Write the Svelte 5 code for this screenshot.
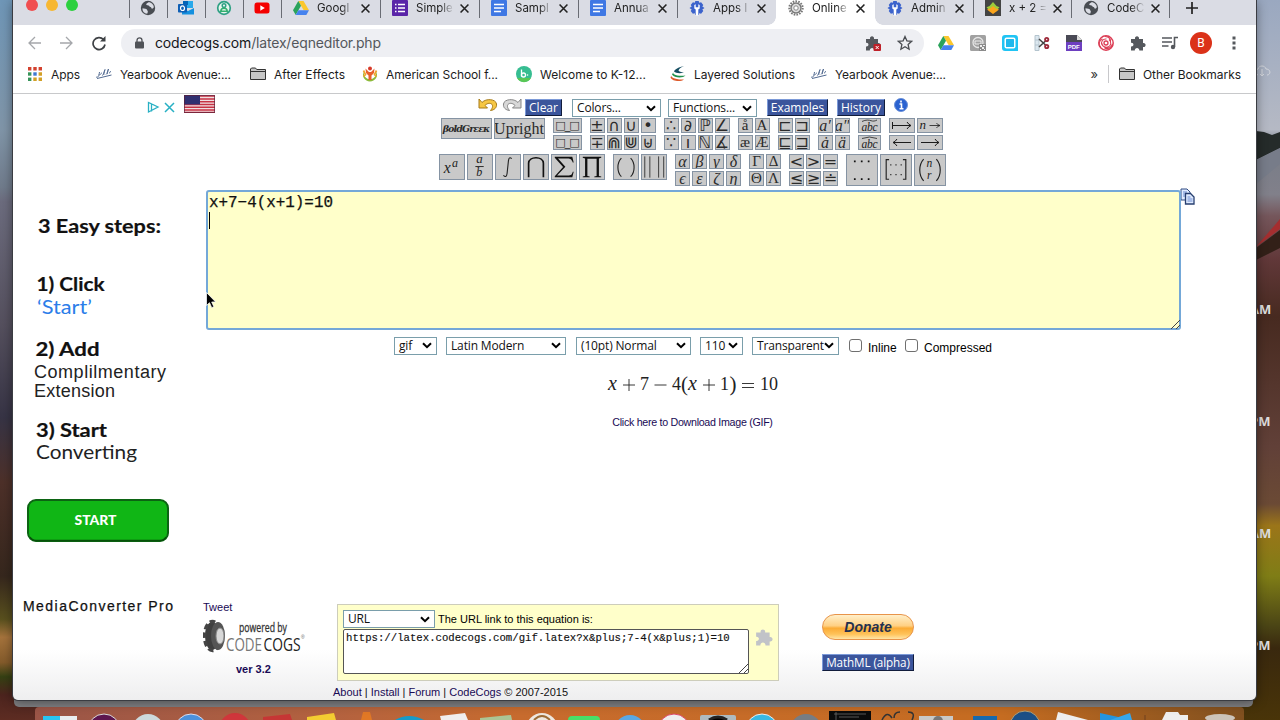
<script lang="ts">
    const pinned: string[] = ['globe', 'outlook', 'person', 'youtube'];

    const tabs = [
        { icon: 'drive', title: 'Googl', width: 99 },
        { icon: 'forms', title: 'Simple', width: 99 },
        { icon: 'docs', title: 'Sampl', width: 99 },
        { icon: 'docs', title: 'Annua', width: 99 },
        { icon: 'admin', title: 'Apps I', width: 99 },
        { icon: 'cog', title: 'Online', width: 99, active: true },
        { icon: 'admin', title: 'Admin', width: 98 },
        { icon: 'leaf', title: 'x + 2 =', width: 98 },
        { icon: 'globe', title: 'CodeC', width: 98 }
    ];

    const bookmarks = [
        { icon: 'apps', title: 'Apps', width: 68, text: 29 },
        { icon: 'jostens', title: 'Yearbook Avenue:...', width: 154, text: 111 },
        { icon: 'folder', title: 'After Effects', width: 112, text: 71 },
        { icon: 'people', title: 'American School f...', width: 154, text: 112 },
        { icon: 'brain', title: 'Welcome to K-12...', width: 154, text: 106 },
        { icon: 'layers', title: 'Layered Solutions', width: 141, text: 101 },
        { icon: 'jostens', title: 'Yearbook Avenue:...', width: 150, text: 111 }
    ];

    const extensions: string[] = ['drive', 'qr', 'square', 'snip', 'pdf', 'swirl', 'puzzle', 'queue'];

    // every group is a grid of equation buttons: columns, cell size, labels
    const panelTop = [
        { cols: 2, w: 51, h: 21, cells: ['βoldGrεεκ', 'Upright'], kind: 'word' },
        { cols: 1, w: 29, h: 15, cells: ['□_□', '□_□'], kind: 'box' },
        { cols: 4, w: 15, h: 15, cells: ['±', '∩', '∪', '•', '∓', '⋒', '⋓', '⊎'], kind: 'sym' },
        { cols: 4, w: 15, h: 15, cells: ['∴', '∂', 'ℙ', '∠', '∵', 'ı', 'ℕ', '∡'], kind: 'sym' },
        { cols: 2, w: 15, h: 15, cells: ['å', 'À', 'æ', 'Æ'], kind: 'serif' },
        { cols: 2, w: 15, h: 15, cells: ['⊏', '⊐', '⊑', '⊒'], kind: 'sym' },
        { cols: 2, w: 15, h: 15, cells: ['a′', 'a″', 'ȧ', 'ä'], kind: 'ital' },
        { cols: 1, w: 23, h: 15, cells: ['tilde', 'hat'], kind: 'accent' },
        { cols: 2, w: 26, h: 15, cells: ['mapsto', 'nto', 'from', 'to'], kind: 'arrow' }
    ];

    const panelBottom = [
        { cols: 6, w: 26, h: 26, cells: ['power', 'frac', 'int', 'cap', 'sum', 'prod'], kind: 'draw' },
        { cols: 2, w: 26, h: 26, cells: ['paren', 'norm'], kind: 'draw' },
        { cols: 4, w: 15, h: 15, cells: ['α', 'β', 'γ', 'δ', 'ϵ', 'ε', 'ζ', 'η'], kind: 'ital' },
        { cols: 2, w: 15, h: 15, cells: ['Γ', 'Δ', 'Θ', 'Λ'], kind: 'serif' },
        { cols: 3, w: 15, h: 15, cells: ['<', '>', '=', '≤', '≥', '≐'], kind: 'sym' },
        { cols: 3, w: 32, h: 32, cells: ['dots', 'matrix', 'binom'], kind: 'draw' }
    ];

    const options = [
        { value: 'gif', width: 43, gap: 9 },
        { value: 'Latin Modern', width: 120, gap: 10 },
        { value: '(10pt) Normal', width: 115, gap: 9 },
        { value: '110', width: 43, gap: 9 },
        { value: 'Transparent', width: 87, gap: 10 }
    ];
</script>

{#snippet icon(name: string)}
    <svg class="icon" viewBox="0 0 16 16">
        {#if name === 'globe'}
            <circle cx="8" cy="8" r="7.2" fill="#484c52" />
            <path d="M2.5 8.2c2 .3 4 .2 4.500 1.500s1 1 .8 2.300l-.6 1.800C4 13.300 2.200 11 2.500 8.200zM8.500 2.300c-.8 1-2.300 1-2.300 2.200s2.500.4 3 1.600 2 .8 2.200 2 2 .4 2.400-.8C14 5 11.500 2.300 8.500 2.300z" fill="#dadce4" />
        {:else if name === 'outlook'}
            <path d="M5 1h10v7H5z" fill="#28a8ea" />
            <path d="M5 1h5v4H5z" fill="#0364b8" />
            <path d="M4 8l6 3 6-3v6.500H4z" fill="#1490df" />
            <rect x="0" y="4" width="9" height="8.500" rx=".8" fill="#0f5fb5" />
            <ellipse cx="4.500" cy="8.200" rx="2" ry="2.300" fill="none" stroke="#fff" stroke-width="1.200" />
        {:else if name === 'person'}
            <circle cx="8" cy="8" r="6.300" fill="#e8f4ee" stroke="#2fa084" stroke-width="1.700" />
            <circle cx="8" cy="5.600" r="1.800" fill="none" stroke="#2fa084" stroke-width="1.500" />
            <path d="M4.800 11.300c0-4 6.400-4 6.400 0z" fill="none" stroke="#35b070" stroke-width="1.600" />
        {:else if name === 'youtube'}
            <rect x=".5" y="2.500" width="15" height="11" rx="2.500" fill="#f40000" />
            <path d="M6.300 5.300l4.500 2.700-4.500 2.700z" fill="#fff" />
        {:else if name === 'drive'}
            <path d="M5.300 1h5.200L16 10.300h-5.300z" fill="#fbc72d" />
            <path d="M5.300 1L0 10.300 2.700 15 8 5.700z" fill="#2aa35b" />
            <path d="M5.400 10.300H16L13.300 15H2.700z" fill="#4582ee" />
        {:else if name === 'forms' || name === 'docs'}
            <rect width="16" height="16" rx="1" fill={name === 'forms' ? '#5a25a8' : '#3f78e4'} />
            {#if name === 'forms'}
                <path d="M3 4.500h1.500M3 8h1.500M3 11.500h1.500M6 4.500h7M6 8h7M6 11.500h7" stroke="#fff" stroke-width="1.500" />
            {:else}
                <path d="M3 4.500h10M3 8h10M3 11.500h7" stroke="#fff" stroke-width="1.600" />
            {/if}
        {:else if name === 'admin'}
            <path d="M6.300 1h3.400l.5 1.800 1.900-.6L14.300 5l-1 1.600L15.500 8l-2.200 1.400 1 1.600-2.200 2.800-1.900-.6-.5 1.800H6.300l-.5-1.800-1.900.6L1.700 11l1-1.600L.5 8l2.200-1.400-1-1.600 2.200-2.800 1.900.6z" fill="#3c63cc" />
            <path d="M5.300 5v3.400l1.400 1.200V15.500h2.600V9.600l1.400-1.200V5L9.300 4.200v3H6.700v-3z" fill="#fff" />
        {:else if name === 'cog'}
            <circle cx="8" cy="8" r="6.700" fill="none" stroke="#777" stroke-width="2" stroke-dasharray="1.600 1.200" />
            <circle cx="8" cy="8" r="5" fill="#ddd" stroke="#777" stroke-width="1.400" />
            <circle cx="8" cy="8" r="2.200" fill="#fff" stroke="#888" />
        {:else if name === 'leaf'}
            <rect width="16" height="16" fill="#444444" />
            <path d="M8 2l3.500 4 3 1.300L12 10H4L1.500 7.300l3-1.300z" fill="#9ccb3b" />
            <path d="M2 9.500l3-1 3-2.500 3 2.500 3 1-2.500 2L8 14l-3.500-2.500z" fill="#fba51c" />
        {:else if name === 'apps'}
            <path d="M1 1h3.400v3.400H1zM6.300 1h3.400v3.400H6.300zM11.600 1H15v3.400h-3.400z" fill="#d3422f" />
            <path d="M1 6.300h3.400v3.400H1z" fill="#38945a" /><path d="M6.300 6.300h3.400v3.400H6.300z" fill="#3d77d1" />
            <path d="M11.600 6.300H15v3.400h-3.400zM6.300 11.600h3.400V15H6.300zM11.600 11.600H15V15h-3.400z" fill="#d2a027" /><path d="M1 11.600h3.400V15H1z" fill="#38945a" />
        {:else if name === 'jostens'}
            <path d="M0 11c2 1 3-1 3.500-5M3 8.500c1 2 2-2 3-1.500M6 9.500c1.500 0 2.500-5 3-6 -1 3-1.500 5-1 5.500M10 8.500c1 0 2-5 2.500-5.500-.8 2.500-1.500 5-.7 5M13 7.500c1-.5.8-2 2-2.300M1 12.500L15.500 9" fill="none" stroke="#526a91" />
        {:else if name === 'folder'}
            <path d="M.5 13.500V3l1-1h4l1.200 1.500h8.800v10z" fill="#c7c7c7" stroke="#333" />
            <path d="M1 5.500h14" stroke="#333" />
        {:else if name === 'people'}
            <path d="M2 5c-3 6 1 10 6 10.500C13 15 17 11 14 5c1 5-2 7-4 8H6C4 12 1 10 2 5z" fill="#8dba3a" />
            <path d="M3.500 2.500L7 6h2l3.500-3.500L12 7l-2.500 2.500V14h-3V9.500L4 7z" fill="#e8602c" />
            <circle cx="8" cy="2.500" r="2" fill="#d73a2a" />
            <path d="M1.500 4.500l2 4-2 2M14.500 4.500l-2 4 2 2" fill="none" stroke="#efa42d" stroke-width="1.700" />
        {:else if name === 'brain'}
            <circle cx="8" cy="8" r="8" fill="#36bd91" />
            <path d="M1 12a8 8 0 0 0 14 0z" fill="#59c755" />
            <path d="M5.500 3.500v7" stroke="#fff" stroke-width="1.300" />
            <circle cx="7.500" cy="9" r="2" fill="none" stroke="#fff" stroke-width="1.300" />
            <circle cx="11.500" cy="9" r=".8" fill="#fff" />
        {:else if name === 'layers'}
            <path d="M14 0C9 1 5 3 4 5.500c2 2 6 2 10 1.200-3-.5-5-1-5.500-2.200C9 3 11 1 14 0z" fill="#174f63" />
            <path d="M3.500 6C2 8 6 10.500 15.500 9.500 13 12.500 4 12 2 8.500z" fill="#20924c" />
            <path d="M1.500 9C0 11 5 14 14 13.500 10 16.500 2 15 .5 11.500z" fill="#dd5a2b" />
        {:else if name === 'qr'}
            <rect width="16" height="16" rx="1.500" fill="#a1a1a1" />
            <circle cx="8" cy="7.500" r="5" fill="none" stroke="#e6e6e6" stroke-width="1.300" />
            <path d="M5 6h6v3H5z" fill="none" stroke="#eee" />
            <path d="M9 9h7v7H9z" fill="#8b8b8b" />
            <path d="M10 10h2v2h-2zM13 10h2v1h-2zM12 12h2v2h-2zM10 14h1v1h-1zM14 14h1v1h-1z" fill="#eee" />
        {:else if name === 'square'}
            <path d="M3 0h10a3 3 0 0 1 3 3v13H3a3 3 0 0 1-3-3V3a3 3 0 0 1 3-3z" fill="#20c4f4" />
            <rect x="2.500" y="2.500" width="11" height="11" rx="2" fill="#fff" />
            <rect x="4" y="4" width="8" height="8" rx=".5" fill="#20b8ec" />
        {:else if name === 'snip'}
            <path d="M1 .5h4v15H1zM1 5h4M1 10h4" fill="#dce7ef" stroke="#b4c4ce" />
            <path d="M5 4l6.500 6M5 12l6.500-6" stroke="#444" stroke-width="1.600" />
            <circle cx="12.700" cy="4.500" r="1.600" fill="none" stroke="#9e2b3b" stroke-width="1.900" />
            <circle cx="12.700" cy="11.500" r="1.600" fill="none" stroke="#9e2b3b" stroke-width="1.900" />
        {:else if name === 'pdf'}
            <path d="M0 0h11l5 5v3H0z" fill="#4a4a55" /><path d="M11 0v5h5z" fill="#ddd" />
            <rect y="7" width="16" height="9" fill="#6d3fc0" />
            <text x="1.700" y="14" class="pdf">PDF</text>
        {:else if name === 'swirl'}
            <circle cx="8" cy="8" r="7.200" fill="none" stroke="#dc3e55" stroke-width="1.500" />
            <path d="M7 1.500c4 0 6.500 3 5.500 6.500M14.500 9c-1 4-5 5.500-8 4M2.500 12.500c-2.500-3-1.500-7 2-8.500M4 10C2.500 6.500 5 3.500 8.500 4M11 4.500c3 2.500 2 6.500-1 7.500M11 11.500c-3 2-7 0-7-3" fill="none" stroke="#dc3e55" stroke-width="1.100" />
            <circle cx="8" cy="8" r="2" fill="none" stroke="#dc3e55" stroke-width="1.300" />
        {:else if name === 'puzzle' || name === 'blocked' || name === 'plugin'}
            <path d="M1 4h4C4.300.3 9.700.3 9 4h4v4c3.500-.5 3.500 4.500 0 4v3.500H9.300c.3-3.500-4.800-3.500-4.500 0H1v-4c3.300.3 3.300-4 0-3.700z" fill={name === 'plugin' ? '#c1c3c8' : '#55585d'} />
            {#if name === 'blocked'}
                <rect x="8.500" y="9" width="7.500" height="7" rx="1" fill="#bf2028" />
                <path d="M10.700 11l3 3M13.700 11l-3 3" stroke="#fff" />
            {/if}
        {:else if name === 'queue'}
            <path d="M0 3h10M0 7h10M0 11h6.500" stroke="#55585d" stroke-width="1.500" />
            <path d="M12.500 12V2.500H16" fill="none" stroke="#55585d" stroke-width="1.600" />
            <circle cx="11" cy="12" r="2.200" fill="#55585d" />
        {/if}
    </svg>
{/snippet}

{#snippet drawing(name: string)}
    <svg viewBox="0 0 26 26" class="drawing">
        {#if name === 'power'}
            <text x="4" y="19" class="it" font-size="17">x</text>
            <text x="13" y="13" class="it" font-size="13">a</text>
        {:else if name === 'frac'}
            <text x="9" y="9" class="it" font-size="14">a</text>
            <path d="M8 12.500h9" stroke="#222" />
            <text x="9" y="23" class="it" font-size="13">b</text>
        {:else if name === 'int'}
            <path d="M17 4c-2-2-3-1-3.500 2L12 20c-.5 4-2 4-4 2" fill="none" stroke="#222" stroke-width="1.200" />
        {:else if name === 'cap'}
            <path d="M5 24V9c0-8 16-8 16 0v15" fill="none" stroke="#111" stroke-width="1.800" />
        {:else if name === 'sum'}
            <path d="M3 2h19l1.500 6h-1C21 4.500 20 3.700 17 3.700H6.500l8 9-9 9.500H17c4 0 4.500-1 5.500-4h1L22 24H3v-1l9-10-9-10z" fill="#111" />
        {:else if name === 'prod'}
            <path d="M3 2h20v1l-2.500.7v19l2.500.6v.9h-7.500v-.9l2.500-.6V4H8v18.700l2.500.6v.9H3v-.9l2.500-.6v-19L3 3z" fill="#111" />
        {:else if name === 'paren'}
            <path d="M8 3.500c-5 5-5 15 0 20M18 3.500c5 5 5 15 0 20" fill="none" stroke="#222" stroke-width="1.200" />
        {:else if name === 'norm'}
            <path d="M3 1.500v23M8.500 1.500v23M18 1.500v23M23.500 1.500v23" stroke="#333" />
        {:else if name === 'dots'}
            <path d="M6 5.500h1.500M12 5.500h1.500M18 5.500h1.500M6 21h1.500M12 21h1.500M18 21h1.500" stroke="#111" stroke-width="1.500" />
        {:else if name === 'matrix'}
            <path d="M7 4H4.500v17H7M19 4h2.500v17H19" fill="none" stroke="#222" />
            <path d="M8 8.500h1M12.500 8.500h1M17 8.500h1M8 17h1M12.500 17h1M17 17h1" stroke="#222" />
        {:else}
            <path d="M7.500 3.500c-4.500 5-4.500 14 0 19M18.500 3.500c4.500 5 4.500 14 0 19" fill="none" stroke="#222" />
            <text x="10" y="10.500" class="it" font-size="10">n</text>
            <text x="10.500" y="21" class="it" font-size="10">r</text>
        {/if}
    </svg>
{/snippet}

{#snippet accent(name: string)}
    <svg viewBox="0 0 21 13" class="drawing">
        <text x="2.500" y="11.500" class="it" font-size="11.500" textLength="16">abc</text>
        {#if name === 'tilde'}
            <path d="M3 2.500c4-2 7-1.500 9-.8s4 .5 6-.7" fill="none" stroke="#222" stroke-width=".8" />
        {:else}
            <path d="M3 2.500q7.500-3 15 0" fill="none" stroke="#222" stroke-width=".8" />
        {/if}
    </svg>
{/snippet}

{#snippet arrow(name: string)}
    <svg viewBox="0 0 24 13" class="drawing">
        {#if name === 'mapsto'}
            <path d="M2.500 3v7M2.500 6.500h18M17 3q1.500 2.500 4 3.500-2.500 1-4 3.500" fill="none" stroke="#1c1c1c" />
        {:else if name === 'nto'}
            <text x="1.500" y="9.500" class="it" font-size="13">n</text>
            <path d="M11.500 6.500h10M18.500 4q1 2 3.500 2.500-2.500.5-3.500 2.500" fill="none" stroke="#1c1c1c" stroke-width=".8" />
        {:else if name === 'from'}
            <path d="M3 6.500h18M7 3q-1.500 2.500-4 3.500 2.500 1 4 3.500" fill="none" stroke="#1c1c1c" />
        {:else}
            <path d="M3 6.500h18M17 3q1.500 2.500 4 3.500-2.500 1-4 3.500" fill="none" stroke="#1c1c1c" />
        {/if}
    </svg>
{/snippet}

{#snippet panel(groups: typeof panelTop)}
    <div class="panel">
        {#each groups as group}
            <div class="group" style="grid-template-columns: repeat({group.cols}, {group.w}px); grid-auto-rows: {group.h}px;">
                {#each group.cells as cell}
                    <span class="cell {group.kind}" class:greek={cell.startsWith('βold')}>
                        {#if group.kind === 'draw'}
                            {@render drawing(cell)}
                        {:else if group.kind === 'accent'}
                            {@render accent(cell)}
                        {:else if group.kind === 'arrow'}
                            {@render arrow(cell)}
                        {:else}
                            {cell}
                        {/if}
                    </span>
                {/each}
            </div>
        {/each}
    </div>
{/snippet}

{#snippet select(value: string, width: number)}
    <span class="select" style="width: {width}px">
        <span>{value}</span>
        <svg viewBox="0 0 10 7"><path d="M1 1.200l4 4 4-4" fill="none" stroke="#000" stroke-width="2" /></svg>
    </span>
{/snippet}

<div class="desktop">
    <svg class="wallpaper" viewBox="0 0 1280 720">
        <defs>
            <linearGradient id="left" x1="0" y1="0" x2="0" y2="1">
                <stop offset="0" stop-color="#6f96b7" />
                <stop offset=".18" stop-color="#8095a8" />
                <stop offset=".26" stop-color="#707b8b" />
                <stop offset=".28" stop-color="#6c6c7e" />
                <stop offset=".45" stop-color="#55505e" />
                <stop offset=".58" stop-color="#373445" />
                <stop offset=".67" stop-color="#4d3029" />
                <stop offset=".8" stop-color="#36271d" />
                <stop offset=".86" stop-color="#59501e" />
                <stop offset=".885" stop-color="#a5733c" />
                <stop offset=".92" stop-color="#845b2b" />
                <stop offset=".94" stop-color="#354013" />
                <stop offset=".965" stop-color="#4c241e" />
                <stop offset="1" stop-color="#5d2c22" />
            </linearGradient>
            <linearGradient id="right" x1="0" y1="0" x2="0" y2="1">
                <stop offset="0" stop-color="#9aa8c0" />
                <stop offset=".18" stop-color="#b5b9c4" />
                <stop offset=".2" stop-color="#777d88" />
                <stop offset=".27" stop-color="#81808a" />
                <stop offset=".3" stop-color="#75565b" />
                <stop offset=".36" stop-color="#613839" />
                <stop offset=".44" stop-color="#472a20" />
                <stop offset=".62" stop-color="#614038" />
                <stop offset=".7" stop-color="#6b4a35" />
                <stop offset=".73" stop-color="#9b7519" />
                <stop offset=".8" stop-color="#7f7d16" />
                <stop offset=".87" stop-color="#4a4415" />
                <stop offset=".9" stop-color="#39280e" />
                <stop offset="1" stop-color="#493408" />
            </linearGradient>
        </defs>
        <rect width="640" height="720" fill="url(#left)" />
        <rect x="640" width="640" height="720" fill="url(#right)" />
        <path d="M1256 131l8 1 8 3 8-3v16l-24 12z" fill="#252b2a" />
        <path d="M1256 160l24-12v16l-24 20z" fill="#777c89" />
        <path d="M1256 247l24-28v10l-24 18z" fill="#a52e2f" />
        <path d="M1256 248l24-18v18l-24 12z" fill="#322018" />
        <path d="M1258 75c-3-1-3-5 0-6 1-4 7-4 8 0 5 0 5 6 1 6M1262 69v7l-2-2m2 2l2-2" fill="none" stroke="#d5d8de" />
        <text x="1250" y="314" class="clock">AM</text>
        <text x="1250" y="426" class="clock">PM</text>
        <text x="1250" y="538" class="clock">AM</text>
        <text x="1250" y="650" class="clock">PM</text>
    </svg>

    <div class="window-behind"></div>

    <svg class="dock" viewBox="35 707 1209 13">
        <defs>
            <linearGradient id="shelf">
                <stop offset="0" stop-color="#9a5547" />
                <stop offset=".25" stop-color="#b4623f" />
                <stop offset=".4" stop-color="#c76b2e" />
                <stop offset=".8" stop-color="#c56c21" />
                <stop offset="1" stop-color="#80501f" />
            </linearGradient>
        </defs>
        <path d="M35 720v-9q0-4 4-4h1201q4 0 4 4v9z" fill="url(#shelf)" />
        <path d="M43 716h17v4H43z" fill="#28c5f2" /><path d="M60 716h17v4H60z" fill="#e9edf0" />
        <circle cx="104" cy="730" r="16" fill="#5c164f" stroke="#ddd" />
        <circle cx="148" cy="730" r="16" fill="#ccd9dc" />
        <circle cx="191" cy="730" r="16" fill="#4b91dc" stroke="#dde" />
        <circle cx="235" cy="729" r="16" fill="#d0363b" />
        <path d="M263 717l27-3 2 6h-29z" fill="#c63635" /><path d="M307 717l27-4 2 7h-29z" fill="#f4cc31" />
        <path d="M363 712h7l2 8h-11z" fill="#e17825" />
        <path d="M395 720q14-8 29 0z" fill="#169ac9" />
        <path d="M440 716l25-3 3 7h-27z" fill="#f0eeee" /><path d="M480 718l31-3 1 5h-32z" fill="#abc595" />
        <circle cx="542" cy="729" r="16" fill="#eee8df" /><path d="M534 720q8-8 16 0" fill="none" stroke="#9c6c35" stroke-width="2" />
        <rect x="568" y="716" width="32" height="12" rx="4" fill="#48df68" />
        <circle cx="630" cy="731" r="16" fill="#5aa8e4" />
        <circle cx="674" cy="730" r="16" fill="#eee" stroke="#de4667" />
        <rect x="700" y="715" width="36" height="8" rx="2" fill="#aebbc0" /><path d="M709 720q9-6 18 0" stroke="#222" stroke-width="3" />
        <circle cx="762" cy="730" r="16" fill="#38b8e3" stroke="#eee" />
        <circle cx="806" cy="730" r="16" fill="#777d84" />
        <path d="M829 711h42v9h-42z" fill="#0b0b0b" />
        <path d="M834 714h32M836 712v8M839 717h20" stroke="#777" stroke-width=".7" />
        <path d="M882 720q5-10 10-2M894 718q0-6 6-6M908 712q8 0 4 8" fill="none" stroke="#333" stroke-width="1.500" />
        <rect x="919" y="716" width="34" height="5" fill="#c9c9c7" /><circle cx="938" cy="721" r="5" fill="#777" />
        <path d="M973 716h24v4h-24z" fill="#1769ad" />
        <circle cx="1025" cy="726" r="15" fill="#1b4f86" stroke="#b1a078" />
        <path d="M1058 712l30 8h-32z" fill="#eee" /><path d="M1100 713l32 7h-32z" fill="#2595df" /><path d="M1130 713l-20 7h22z" fill="#36a7ec" />
        <path d="M1145 715v5" stroke="#70411e" />
        <path d="M1166 712h12l2 3h8v5h-26z" fill="#eee" />
        <ellipse cx="1220" cy="718" rx="15" ry="4" fill="#ccc4ba" />
    </svg>

    <div class="browser">
        <header class="tabstrip">
            <div class="lights"><i class="red"></i><i class="yellow"></i><i class="green"></i></div>
            {#each pinned as name}
                <div class="pin">{@render icon(name)}</div>
            {/each}
            {#each tabs as tab}
                <div class="tab" class:active={tab.active} style="width: {tab.width}px">
                    {@render icon(tab.icon)}
                    <span class="title">{tab.title}</span>
                    <svg class="close" viewBox="0 0 8 8"><path d="M.5.5l7 7M7.500.5l-7 7" stroke="#222" stroke-width="1.400" /></svg>
                </div>
            {/each}
            <div class="plus"><svg viewBox="0 0 12 12"><path d="M6 0v12M0 6h12" stroke="#222" stroke-width="1.700" /></svg></div>
        </header>

        <nav class="toolbar">
            <svg class="arrows" viewBox="0 0 78 16">
                <path d="M13 8H1M7 2L1 8l6 6M32 8h12M38 2l6 6-6 6" fill="none" stroke="#a5a7ab" stroke-width="1.300" />
                <path d="M75.500 4.500A6 6 0 1 0 77 9.500" fill="none" stroke="#3e4145" stroke-width="1.700" />
                <path d="M77.500 1v5.500H72z" fill="#3e4145" />
            </svg>
            <div class="url">
                <svg class="lock" viewBox="0 0 9 12"><path d="M2 5V3.500c0-3.500 5-3.500 5 0V5" fill="none" stroke="#505358" stroke-width="1.300" /><rect y="4.500" width="9" height="7" rx="1" fill="#505358" /></svg>
                <span class="address"><b>codecogs.com</b>/latex/eqneditor.php</span>
                {@render icon('blocked')}
                <svg class="star" viewBox="0 0 16 16"><path d="M8 1.500l1.900 4.300 4.700.5-3.500 3.200 1 4.700L8 11.800l-4.100 2.400 1-4.700L1.400 6.300l4.700-.5z" fill="none" stroke="#4a4d52" stroke-width="1.300" /></svg>
            </div>
            <div class="extensions">
                {#each extensions as name}
                    {@render icon(name)}
                {/each}
            </div>
            <span class="avatar">B</span>
            <svg class="menu" viewBox="0 0 4 14"><path d="M.5.500h3v3h-3zM.5 5.500h3v3h-3zM.5 10.500h3v3h-3z" fill="#55585d" /></svg>
        </nav>

        <nav class="bookmarks">
            {#each bookmarks as mark}
                <div class="bookmark" style="width: {mark.width}px">
                    {@render icon(mark.icon)}
                    <svg class="label" width={mark.text} height="18"><text y="13.500" textLength={mark.text}>{mark.title}</text></svg>
                </div>
            {/each}
            <div class="more">»</div>
            <div class="other">
                {@render icon('folder')}
                <svg class="label" width="98" height="18"><text y="13.500" textLength="98">Other Bookmarks</text></svg>
            </div>
        </nav>

        <div class="page">
            <aside>
                <svg viewBox="13 94 171 606" width="171" height="606">
                    <path d="M148.500 102.500v9.500l9.500-5zM151.500 103.500v8" fill="none" stroke="#28b0c4" stroke-width="1.300" />
                    <path d="M165 103l9 9M174 103l-9 9" stroke="#28b0c4" stroke-width="1.500" />
                    <g class="ad-bold">
                        <text x="38" y="233" textLength="123" lengthAdjust="spacingAndGlyphs">3 Easy steps:</text>
                        <text x="36.500" y="291" textLength="68" lengthAdjust="spacingAndGlyphs">1) Click</text>
                        <text x="35.500" y="356" textLength="64" lengthAdjust="spacingAndGlyphs">2) Add</text>
                        <text x="36" y="437" textLength="71" lengthAdjust="spacingAndGlyphs">3) Start</text>
                    </g>
                    <text class="ad-soft blue" x="37" y="314" textLength="55" lengthAdjust="spacingAndGlyphs">‘Start’</text>
                    <text class="ad-plain" x="34" y="378" textLength="132">Complilmentary</text>
                    <text class="ad-plain" x="34" y="397" textLength="81">Extension</text>
                    <text class="ad-soft" x="36" y="459" textLength="101" lengthAdjust="spacingAndGlyphs">Converting</text>
                    <rect x="28" y="500" width="140" height="41" rx="8" fill="#10b615" stroke="#0c6413" stroke-width="2" />
                    <path d="M30 537q2 3.500 6 3.500h124q4 0 6-3.500" fill="none" stroke="#07500a" stroke-width="1.500" />
                    <text class="ad-start" x="74.500" y="525" textLength="42" lengthAdjust="spacingAndGlyphs">START</text>
                    <text class="ad-name" x="23" y="611" textLength="150">MediaConverter Pro</text>
                </svg>
            </aside>

            <main>
                <div class="actions">
                    <svg class="flag" viewBox="0 0 31 18">
                        <rect width="31" height="18" fill="#f0dfe2" />
                        <path d="M0 1h31M0 4h31M0 6.800h31M0 9.500h31M0 12.200h31M0 15h31M0 17.500h31" stroke="#c73344" stroke-width="1.400" />
                        <rect width="16" height="9.500" fill="#302f70" />
                        <rect x=".5" y=".5" width="30" height="17" fill="none" stroke="#5b2037" opacity=".7" />
                    </svg>
                    <svg class="undo" viewBox="0 0 20 14"><path d="M1 1v9h8.500L7 7.500C10 4 15 5 14.500 8.500c0 1.500-1 2.500-2 4 4-.5 6.500-3 6-6.500C18 1 8 0 4 4.500z" fill="#f6c744" stroke="#a77b18" /></svg>
                    <svg class="redo" viewBox="0 0 20 14"><path d="M19 1v9h-8.500L13 7.500C10 4 5 5 5.500 8.500c0 1.500 1 2.500 2 4-4-.5-6.500-3-6-6.500C2 1 12 0 16 4.500z" fill="#d8d8d8" stroke="#858585" /></svg>
                    <span class="button clear">Clear</span>
                    {@render select('Colors...', 89)}
                    {@render select('Functions...', 89)}
                    <span class="button examples">Examples</span>
                    <span class="button history">History</span>
                    <svg class="info" viewBox="0 0 14 14"><circle cx="7" cy="7" r="6.500" fill="#2a62d0" stroke="#6c91d8" /><path d="M7 2.500v2M5.500 6H7.500v4.500M5.500 10.800h4" fill="none" stroke="#fff" stroke-width="1.600" /></svg>
                </div>

                <div class="upper">{@render panel(panelTop)}</div>
                {@render panel(panelBottom)}

                <div class="editor">
                    <div class="code">x+7−4(x+1)=10<br /><span class="caret"></span>
                        <svg class="grip" viewBox="0 0 9 9"><path d="M0 9l9-9M5 9l4-4" stroke="#444" /></svg>
                        <svg class="pointer" viewBox="0 0 10 17"><path d="M.5.5v13l3-2.800 2.200 5 2.200-1-2.200-4.700h4z" fill="#000" stroke="#fff" stroke-width=".8" /></svg>
                    </div>
                    <svg class="copy" viewBox="0 0 15 17">
                        <path d="M1 1h6l3 3v8H1z" fill="#dfeafe" stroke="#314c84" /><path d="M3 4h4M3 6h4M3 8h4" stroke="#6d8cd0" />
                        <path d="M5.500 5.500h5l3.500 3.500v7H5.500z" fill="#dfeafe" stroke="#273f70" stroke-width="1.300" /><path d="M7.500 9h3M7.500 11h5M7.500 13h5" stroke="#6d8cd0" />
                    </svg>
                </div>

                <div class="options">
                    {#each options as option}
                        <div style="margin-right: {option.gap}px">{@render select(option.value, option.width)}</div>
                    {/each}
                    <i class="check"></i><span class="inline">Inline</span>
                    <i class="check"></i><span class="compressed">Compressed</span>
                </div>

                <div class="preview">
                    <svg class="equation" viewBox="0 0 172 26" width="172" height="26">
                        <g class="math">
                            <text class="var" x="1" y="18">x</text>
                            <text x="33" y="18">7</text>
                            <text x="65" y="18">4</text>
                            <text class="bracket" x="74" y="18.500">(</text>
                            <text class="var" x="81" y="18">x</text>
                            <text x="113" y="18">1</text>
                            <text class="bracket" x="122.500" y="18.500">)</text>
                            <text x="153" y="18">10</text>
                        </g>
                        <path d="M16 13h12M22 7v12M47.500 13h12M96 13h12M102 7v12M135 11.500h12M135 15.500h12" stroke="#222" stroke-width=".9" />
                    </svg>
                    <a class="download" href="#download">Click here to Download Image (GIF)</a>
                </div>

                <footer>
                    <div class="brand">
                        <a href="#tweet">Tweet</a>
                        <svg viewBox="203 615 104 42" width="104" height="42">
                            <ellipse cx="212" cy="636" rx="7" ry="14" fill="#3f3f3f" />
                            <ellipse cx="212.500" cy="636" rx="8" ry="14.500" fill="none" stroke="#454545" stroke-width="3.500" stroke-dasharray="5.500 3" />
                            <ellipse cx="218" cy="636" rx="7" ry="14" fill="#555" />
                            <ellipse cx="220" cy="636" rx="4" ry="8" fill="#d8d8d8" stroke="#888" />
                            <text x="239" y="632" class="powered" textLength="48" lengthAdjust="spacingAndGlyphs">powered by</text>
                            <text x="226" y="651" class="code-word" textLength="36" lengthAdjust="spacingAndGlyphs">CODE</text>
                            <text x="263.500" y="651" class="code-word dark" textLength="37" lengthAdjust="spacingAndGlyphs">COGS</text>
                            <text x="301" y="639" font-size="5" fill="#666">®</text>
                        </svg>
                        <b>ver 3.2</b>
                    </div>

                    <div class="embed">
                        <div class="link-box">
                            <div class="link-main">
                                <div class="link-head">{@render select('URL', 92)}<span class="hint">The URL link to this equation is:</span></div>
                                <div class="link">https://latex.codecogs.com/gif.latex?x&amp;plus;7-4(x&amp;plus;1)=10
                                    <svg class="grip" viewBox="0 0 9 9"><path d="M0 9l9-9M5 9l4-4" stroke="#444" /></svg>
                                </div>
                            </div>
                            {@render icon('plugin')}
                        </div>
                        <p class="copyright"><a href="#about">About</a> | <a href="#install">Install</a> | <a href="#forum">Forum</a> | <a href="#codecogs">CodeCogs</a> © 2007-2015</p>
                    </div>

                    <div class="support">
                        <span class="donate">Donate</span>
                        <span class="button mathml">MathML (alpha)</span>
                    </div>
                </footer>
            </main>
        </div>
    </div>
</div>

<style>
    :global(body) {
        overflow: hidden;
    }

    .desktop {
        width: 1280px;
        height: 720px;
        position: relative;
        overflow: hidden;
        font-family: "Liberation Sans", Arial, sans-serif;
    }

    .desktop, .desktop * {
        box-sizing: border-box;
    }

    svg {
        display: block;
        flex: none;
    }

    a {
        color: #190a55;
        text-decoration: none;
    }

    .wallpaper {
        position: absolute;
        inset: 0;
        width: 1280px;
        height: 720px;
    }

    .clock {
        font: bold 13px "Open Sans", sans-serif;
        fill: #dedede;
    }

    .window-behind {
        position: absolute;
        left: 14px;
        top: 20px;
        width: 1239px;
        height: 687px;
        border-radius: 5px;
        background: #808184;
    }

    .dock {
        position: absolute;
        left: 35px;
        top: 707px;
        width: 1209px;
        height: 13px;
    }

    .browser {
        position: absolute;
        left: 13px;
        top: 0;
        width: 1243px;
        height: 700px;
        overflow: hidden;
        background: linear-gradient(#fff 650px, #eeeeef 700px);
        border-radius: 0 0 5px 5px;
        box-shadow: 0 0 0 1px #3a3c42, 0 2px 12px rgba(0, 0, 0, .45);
    }

    .icon {
        width: 16px;
        height: 16px;
        overflow: visible;
    }

    .pdf {
        font: bold 6px "Liberation Sans", sans-serif;
        fill: #fff;
    }

    .tabstrip {
        display: flex;
        height: 25px;
        background: #dadce4;
    }

    .lights {
        display: flex;
        gap: 8px;
        width: 116px;
        padding-left: 13px;
    }

    .lights i {
        width: 12px;
        height: 12px;
        margin-top: -1px;
        border-radius: 50%;
    }

    .red { background: #f04e50; }
    .yellow { background: #f7b731; }
    .green { background: #2cd03e; }

    .pin {
        width: 38px;
        padding-left: 11px;
    }

    .pin,
    .tab {
        background-image: linear-gradient(#696c74, #696c74);
        background-size: 1px 18px;
        background-repeat: no-repeat;
    }

    .tab {
        display: flex;
        padding-left: 12px;
    }

    .tab.active {
        height: 26px;
        background: #fff;
        position: relative;
    }

    .tab.active::before,
    .tab.active::after {
        content: '';
        position: absolute;
        bottom: 1px;
        width: 8px;
        height: 8px;
    }

    .tab.active::before {
        left: -8px;
        background: radial-gradient(circle at 0 0, #dadce4 7.500px, #fff 8px);
    }

    .tab.active::after {
        right: -8px;
        background: radial-gradient(circle at 100% 0, #dadce4 7.500px, #fff 8px);
    }

    .tab.active + .tab {
        background-image: none;
    }

    .title {
        width: 40px;
        height: 18px;
        margin-left: 8px;
        white-space: nowrap;
        font: 11.500px/16px Inter, sans-serif;
        color: #222;
        -webkit-mask-image: linear-gradient(90deg, #000 60%, transparent 95%);
        mask-image: linear-gradient(90deg, #000 60%, transparent 95%);
    }

    .close {
        width: 9px;
        height: 9px;
        margin: 4px 0 0 4px;
    }

    .plus {
        width: 44px;
        padding: 2px 0 0 17px;
        background: linear-gradient(#696c74, #696c74) 0 0 / 1px 18px no-repeat;
    }

    .plus svg {
        width: 12px;
        height: 12px;
    }

    .toolbar {
        display: flex;
        align-items: center;
        height: 36px;
        padding-left: 15px;
    }

    .arrows {
        width: 78px;
        height: 16px;
        margin-right: 15px;
    }

    .url {
        display: flex;
        align-items: center;
        width: 803px;
        height: 28px;
        padding: 0 11px 0 14px;
        border-radius: 14px;
        background: #eeeff3;
    }

    .lock {
        width: 9px;
        height: 12px;
        margin-right: 11px;
    }

    .address {
        flex: 1;
        margin-top: -1px;
        font: 14px Inter, sans-serif;
        letter-spacing: -.17px;
        color: #54575c;
    }

    .address b {
        font-weight: 400;
        color: #15171a;
    }

    .star {
        width: 16px;
        height: 16px;
        margin-left: 16px;
    }

    .extensions {
        display: flex;
        gap: 16px;
        margin-left: 14px;
    }

    .avatar {
        width: 22px;
        height: 22px;
        margin: 0 20px 0 12px;
        border-radius: 50%;
        background: #db3219;
        color: #fff;
        font: 12px/22px Roboto, sans-serif;
        text-align: center;
    }

    .menu {
        width: 4px;
        height: 14px;
    }

    .bookmarks {
        display: flex;
        align-items: center;
        height: 33px;
        padding: 0 15px 6px 14px;
        border-bottom: 1px solid #c8c9cb;
    }

    .bookmark,
    .other {
        display: flex;
        align-items: center;
        gap: 8px;
    }

    .bookmark:first-child {
        margin-right: 1px;
    }

    .label {
        overflow: visible;
        font: 12px Inter, sans-serif;
        fill: #1c1c1c;
    }

    .more {
        flex: 1;
        padding-right: 10px;
        text-align: right;
        font: 13px Inter, sans-serif;
        color: #333;
    }

    .other {
        padding-left: 10px;
        border-left: 1px solid #c8c8cb;
    }

    .page {
        display: flex;
        height: 606px;
    }

    aside {
        width: 171px;
    }

    .ad-bold { font: bold 18.500px Lato, sans-serif; fill: #111; stroke: #111; stroke-width: .2; }
    .ad-soft { font: 18.500px Lato, sans-serif; fill: #222; }
    .ad-soft.blue { fill: #2b7de9; }
    .ad-plain { font: 18px "Liberation Sans", sans-serif; fill: #222; }
    .ad-start { font: 900 13px Lato, sans-serif; fill: #fff; }
    .ad-name { font: 14px "Liberation Sans", sans-serif; fill: #111; stroke: #111; stroke-width: .25; }

    main {
        flex: 1;
        padding-right: 55px;
    }

    .actions {
        display: flex;
        height: 24px;
        padding-top: 4px;
    }

    .flag {
        width: 31px;
        height: 18px;
        margin: -3px 263px 0 0;
    }

    .undo, .redo {
        width: 20px;
        height: 14px;
        margin-right: 4px;
    }

    .redo {
        margin-right: 3px;
    }

    .button {
        height: 17px;
        border: 1px solid;
        border-color: #7c9ad8 #111c3b #111c3b #7c9ad8;
        background: #3b559c;
        color: #fff;
        font: 12px/15px "Open Sans", sans-serif;
        text-align: center;
        white-space: nowrap;
    }

    .clear { width: 37px; margin-right: 10px; }
    .examples { width: 61px; margin: 0 9px 0 3px; }
    .history { width: 48px; margin-right: 9px; }
    .clear, .examples, .history { margin-top: .5px; }
    .mathml { font-size: 11.700px; letter-spacing: -.1px; }

    .info {
        width: 14px;
        height: 14px;
    }

    .select {
        display: flex;
        align-items: center;
        justify-content: space-between;
        height: 18px;
        padding: 0 4px 0 4px;
        border: 1px solid #7a9eab;
        background: #fff;
        color: #111;
        font: 12px/16px "Open Sans", sans-serif;
        letter-spacing: -.15px;
        white-space: nowrap;
    }

    .actions .select {
        margin: 1px 7px 0 0;
    }

    .select svg {
        width: 10px;
        height: 7px;
    }

    .upper {
        margin-left: -1px;
        padding-right: 1px;
    }

    .panel {
        display: flex;
        justify-content: center;
        align-items: flex-start;
        gap: 8px;
        height: 36px;
    }

    .group {
        display: grid;
        gap: 2px;
    }

    .cell {
        display: flex;
        align-items: center;
        justify-content: center;
        overflow: hidden;
        border: 1px solid #8593a3;
        background: #c9c9c9;
        color: #2b2b2b;
        font-family: "Liberation Serif", "DejaVu Serif", serif;
        line-height: 13px;
    }

    .word { font-size: 16px; }
    .greek { font: italic bold 9.500px "DejaVu Serif", serif; letter-spacing: -.9px; }
    .box { font: 11px/13px "DejaVu Sans", sans-serif; letter-spacing: -1px; }
    .sym { font: 16px/13px "DejaVu Sans", sans-serif; }
    .serif { font-size: 15px; }
    .ital { font-size: 16px; font-style: italic; }

    .drawing {
        width: 100%;
        height: 100%;
    }

    .it {
        font-family: "Liberation Serif", serif;
        font-style: italic;
        fill: #222;
    }

    .editor {
        display: flex;
        height: 146px;
        padding-left: 22px;
    }

    .code {
        position: relative;
        width: 975px;
        height: 140px;
        flex: none;
        padding: 2px 1px;
        border: 2px solid #74a8d8;
        border-radius: 3px;
        background: #ffffca;
        color: #111;
        font: 15.900px/18px "Liberation Mono", monospace;
        -webkit-text-stroke: .25px #111;
    }

    .caret {
        display: block;
        width: 1px;
        height: 17px;
        background: #000;
    }

    .grip {
        position: absolute;
        right: 0;
        bottom: 0;
        width: 9px;
        height: 9px;
    }

    .code .grip {
        right: -1px;
        bottom: -1px;
    }

    .pointer {
        position: absolute;
        left: -2px;
        top: 100px;
        width: 10px;
        height: 17px;
    }

    .copy {
        width: 15px;
        height: 17px;
        margin: -2px 0 0 -1px;
    }

    .options {
        display: flex;
        height: 20px;
        padding-left: 210px;
        font-size: 12px;
    }

    .options .select {
        margin-top: .5px;
    }

    .check {
        width: 13px;
        height: 13px;
        margin: 3px 6px 0 0;
        border: 1px solid #6f6f6f;
        border-radius: 3px;
    }

    .inline,
    .compressed {
        margin-top: 5px;
    }

    .inline {
        width: 37px;
    }

    .preview {
        display: flex;
        flex-direction: column;
        align-items: center;
        height: 248px;
        padding-top: 15px;
    }

    .equation {
        margin-top: 1px;
    }

    .math {
        font-family: "Liberation Serif", serif;
        font-size: 18px;
        fill: #222;
    }

    .var { font-style: italic; font-size: 20px; }
    .bracket { font-size: 21px; }

    .download {
        margin-top: 17px;
        font-size: 10.700px;
        line-height: 14px;
        letter-spacing: -.3px;
    }

    footer {
        display: flex;
        padding-left: 19px;
    }

    .brand {
        display: flex;
        flex-direction: column;
        width: 134px;
        font-size: 11px;
        line-height: 11px;
    }

    .brand a {
        margin: -2px 0 2px;
    }

    .brand b {
        padding: 7px 0 0 33px;
        color: #190a55;
    }

    .powered { font: 12px "Open Sans", sans-serif; fill: #333; stroke: #333; stroke-width: .3; }
    .code-word { font: 18px "Open Sans", sans-serif; fill: #777; }
    .dark { fill: #222; }

    .link-box {
        display: flex;
        width: 442px;
        height: 77px;
        padding: 5px;
        border: 1px solid #cdcdbb;
        background: #ffffca;
    }

    .link-box > .icon {
        width: 18px;
        height: 18px;
        margin: 18px 0 0 6px;
    }

    .link-head {
        display: flex;
        gap: 3px;
    }

    .hint {
        font-size: 11px;
        line-height: 19px;
    }

    .link {
        position: relative;
        width: 406px;
        height: 45px;
        padding: 2px 2px;
        border: 1px solid #555;
        border-radius: 2px;
        background: #fff;
        color: #111;
        font: 10.670px/13px "Liberation Mono", monospace;
        -webkit-text-stroke: .15px #111;
        white-space: nowrap;
    }

    .copyright {
        margin: 4px 0 0 -4px;
        font-size: 11px;
        line-height: 15px;
        color: #111;
    }

    .support {
        display: flex;
        flex-direction: column;
        gap: 14px;
        margin: 10px 0 0 43px;
    }

    .donate {
        width: 92px;
        height: 26px;
        border: 1px solid #e8944a;
        border-radius: 13px;
        background: linear-gradient(#ffefc9, #ffd083 45%, #fbab35 55%, #ffc35a 80%, #ffe5a8);
        color: #23304f;
        font: italic bold 14px/24px "Liberation Sans", sans-serif;
        text-align: center;
    }
</style>
